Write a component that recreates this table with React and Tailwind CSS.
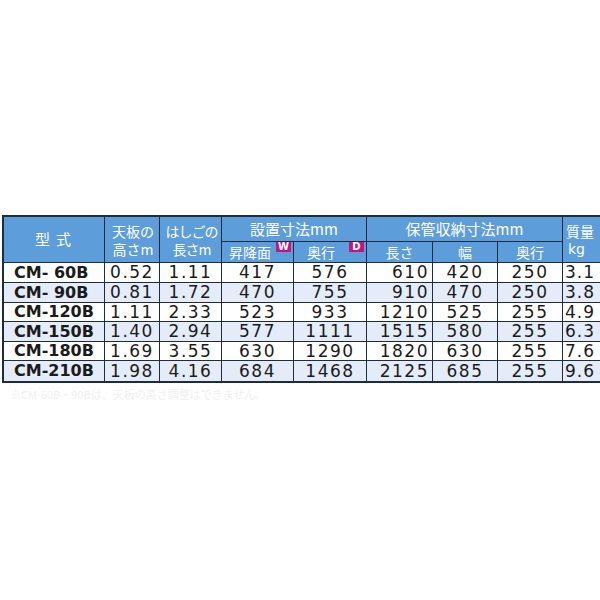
const rows = [
  ['CM- 60B', '0.52', '1.11', '417', '576', '610', '420', '250', '3.1'],
  ['CM- 90B', '0.81', '1.72', '470', '755', '910', '470', '250', '3.8'],
  ['CM-120B', '1.11', '2.33', '523', '933', '1210', '525', '255', '4.9'],
  ['CM-150B', '1.40', '2.94', '577', '1111', '1515', '580', '255', '6.3'],
  ['CM-180B', '1.69', '3.55', '630', '1290', '1820', '630', '255', '7.6'],
  ['CM-210B', '1.98', '4.16', '684', '1468', '2125', '685', '255', '9.6'],
];

const rowHeights = ['h-[20px]', 'h-[20px]', 'h-[19px]', 'h-[20px]', 'h-[19px]', 'h-[20px]'];

const jp = { fontFamily: '"Noto Sans CJK JP", "Noto Sans", sans-serif' };
const num = { fontFamily: '"DejaVu Sans", "Liberation Sans", sans-serif' };

function Badge({ children }) {
  return (
    <span
      className="absolute top-0 right-[2px] flex h-[10px] w-[15px] items-center justify-center bg-[#c4147f] text-[10px] font-bold leading-none text-white"
      style={num}
    >
      {children}
    </span>
  );
}

export default function App() {
  const hd = 'flex items-center justify-center border-r border-b border-[#1e2c40] bg-[#5d9dd9] text-white';
  return (
    <div className="min-h-[600px] w-[600px] overflow-hidden bg-white pt-[215px]">
      <div className="ml-[2px] w-[605px] border-t-2 border-l-2 border-b-2 border-[#1e2c40]">
        <div className="grid grid-cols-[101px_55px_62px_72px_73px_66px_65px_65px_43px] grid-rows-[25px_21px]" style={jp}>
          <div className={`${hd} row-span-2 text-[15px] tracking-[6px] pl-[4px]`}>型式</div>
          <div className={`${hd} row-span-2 flex-col gap-[4px] text-[14px] leading-none pl-[2px]`}>
            <span>天板の</span>
            <span>高さm</span>
          </div>
          <div className={`${hd} row-span-2 flex-col gap-[4px] text-[14px] leading-none tracking-[-1px] whitespace-nowrap pl-[2px]`}>
            <span>はしごの</span>
            <span>長さm</span>
          </div>
          <div className={`${hd} col-span-2 text-[15px]`}>設置寸法mm</div>
          <div className={`${hd} col-span-3 text-[15px]`}>保管収納寸法mm</div>
          <div className={`${hd} row-span-2 flex-col items-start gap-[4px] pl-[3px] text-[14px] leading-none`}>
            <span>質量</span>
            <span className="pl-[2px]" style={num}>kg</span>
          </div>
          <div className={`${hd} relative justify-start pl-[7px] text-[14px]`}>
            昇降面
            <Badge>W</Badge>
          </div>
          <div className={`${hd} relative justify-start pl-[13px] text-[14px]`}>
            奥行
            <Badge>D</Badge>
          </div>
          <div className={`${hd} text-[14px]`}>長さ</div>
          <div className={`${hd} text-[14px]`}>幅</div>
          <div className={`${hd} text-[14px]`}>奥行</div>
        </div>

        {rows.map((r, i) => (
          <div
            key={r[0]}
            className={`grid grid-cols-[101px_55px_62px_72px_73px_66px_65px_65px_43px] ${rowHeights[i]} ${i % 2 === 1 ? 'bg-[#e3ecf8]' : 'bg-white'} ${i < rows.length - 1 ? 'border-b border-[#1e2c40]' : ''} text-[#1b1b1b]`}
            style={num}
          >
            <div className="flex items-center whitespace-pre border-r border-[#1e2c40] pl-[10px] text-[16px] font-bold leading-none">
              {r[0]}
            </div>
            <div className="flex items-center justify-center border-r border-[#1e2c40] text-[17px] leading-none tracking-[1.5px]">{r[1]}</div>
            <div className="flex items-center justify-center border-r border-[#1e2c40] text-[17px] leading-none tracking-[1.5px]">{r[2]}</div>
            <div className="flex items-center justify-center border-r border-[#1e2c40] text-[17px] leading-none tracking-[1.5px]">{r[3]}</div>
            <div className="flex items-center justify-center border-r border-[#1e2c40] text-[17px] leading-none tracking-[1.5px]">{r[4]}</div>
            <div className="flex items-center justify-end border-r border-[#1e2c40] pr-[3px] text-[17px] leading-none tracking-[1.5px]">{r[5]}</div>
            <div className="flex items-center justify-center border-r border-[#1e2c40] text-[17px] leading-none tracking-[1.5px]">{r[6]}</div>
            <div className="flex items-center justify-center border-r border-[#1e2c40] text-[17px] leading-none tracking-[1.5px]">{r[7]}</div>
            <div className="flex items-center pl-[2px] text-[17px] leading-none tracking-[1px]">{r[8]}</div>
          </div>
        ))}
      </div>
      <p className="mt-[3px] pl-[10px] text-[11px] text-[#f0f0f0]" style={jp}>
        ※CM-60B・90Bは、天板の高さ調整はできません。
      </p>
    </div>
  );
}
